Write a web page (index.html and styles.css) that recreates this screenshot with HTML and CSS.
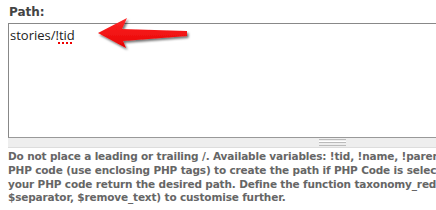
FILE: index.html
```html
<!DOCTYPE html>
<html lang="en">
<head>
    <meta charset="UTF-8">
    <title>Path</title>
    <link rel="stylesheet" href="styles.css">
</head>
<body>
    <div class="form-item">
        <label class="form-label">Path:</label>
        <div class="resizable">
            <div class="form-textarea">stories/!<span class="misspelt">tid</span></div>
            <div class="grippie"><span class="grip"></span></div>
        </div>
        <div class="description">
            Do not place a leading or trailing /. Available variables: !tid, !name, !parent_ids<br>
            PHP code (use enclosing PHP tags) to create the path if PHP Code is selected. Make sure<br>
            your PHP code return the desired path. Define the function taxonomy_redirect_custom_term_path($tid,<br>
            $separator, $remove_text) to customise further.
        </div>

        <!-- callout arrow -->
        <svg class="arrow" width="100" height="40" viewBox="0 0 100 40">
            <defs>
                <filter id="shadow" x="-20%" y="-40%" width="140%" height="180%">
                    <feDropShadow dx="1.5" dy="2" stdDeviation="1.2" flood-color="#000" flood-opacity="0.55"/>
                </filter>
                <linearGradient id="red" x1="0" y1="0" x2="0" y2="1">
                    <stop offset="0" stop-color="#ff2a2a"/>
                    <stop offset="1" stop-color="#e60000"/>
                </linearGradient>
            </defs>
            <polygon points="2,17 31,2 26,13 91,15 91,20 27,25 30,32" fill="url(#red)" filter="url(#shadow)"/>
        </svg>
    </div>
</body>
</html>
```

FILE: styles.css
```css
body {
    margin: 0;
    padding: 0;
    background-color: #fff;
    overflow: hidden;
    font-family: "DejaVu Sans", Verdana, sans-serif;
}

.form-item {
    position: relative;
    padding: 5px 0 0 8px;
}

.form-label {
    display: block;
    font-size: 12px;
    font-weight: bold;
    color: #444;
    height: 18px;
    padding-left: 1px;
}

.resizable {
    width: 648px;
}

.form-textarea {
    height: 107px;
    border: 1px solid #888;
    border-bottom-color: #999;
    padding: 3px 1px;
    font-family: "Open Sans", "DejaVu Sans", sans-serif;
    font-size: 13px;
    line-height: 16px;
    color: #222;
}

.misspelt {
    text-decoration: underline dotted #e00;
    text-decoration-thickness: 2px;
    text-underline-offset: 2px;
}

.grippie {
    height: 9px;
    background-color: #eee;
    border-bottom: 1px solid #ddd;
    display: flex;
    justify-content: center;
    align-items: center;
}

.grip {
    width: 27px;
    height: 5px;
    border-top: 1px solid #bbb;
    border-bottom: 1px solid #bbb;
    background: linear-gradient(#fff 0 1px, #bbb 1px 2px, #eee 2px) 0 1px / 100% 3px no-repeat;
}

.description {
    margin-top: 2px;
    font-size: 10.5px;
    letter-spacing: -0.15px;
    line-height: 13.8px;
    font-weight: bold;
    color: #666;
    white-space: nowrap;
}

.arrow {
    position: absolute;
    left: 96px;
    top: 16px;
}
```
